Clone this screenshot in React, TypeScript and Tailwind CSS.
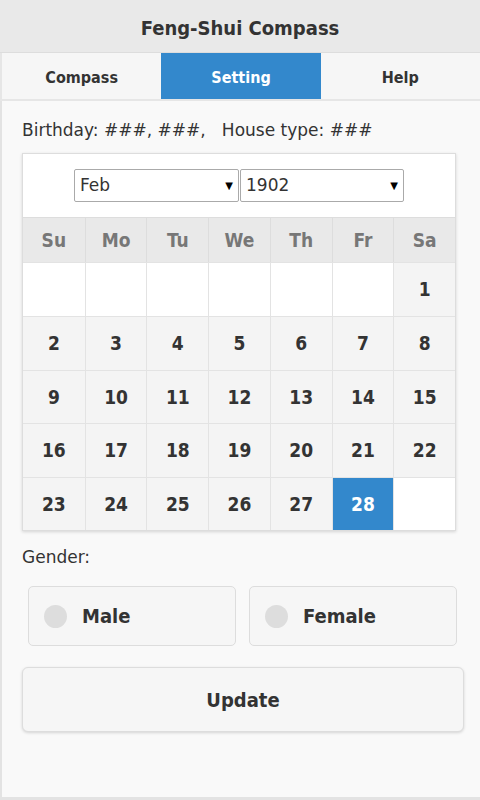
const BOLD = "font-['DejaVu_Sans_Condensed','DejaVu_Sans',sans-serif]";
const REGULAR = "font-['DejaVu_Sans',sans-serif]";

const weekdays = ['Su', 'Mo', 'Tu', 'We', 'Th', 'Fr', 'Sa'];
const rowHeights = ['h-[54px]', 'h-[54px]', 'h-[53px]', 'h-[54px]', 'h-[53px]'];

// Feb 1902 starts on Saturday, 28 days
const cells: (number | null)[] = [
  ...Array(6).fill(null),
  ...Array.from({ length: 28 }, (_, i) => i + 1),
  null,
];

function Radio({ label }: { label: string }) {
  return (
    <button className="w-[208px] h-[60px] flex items-center gap-[15px] pl-[15px] rounded-[5px] border border-[#dddddd] bg-[#f6f6f6] text-left">
      <span className="w-[23px] h-[23px] rounded-full bg-[#dddddd]" />
      <span className={`${BOLD} text-[20px] font-bold text-[#333333]`}>{label}</span>
    </button>
  );
}

function Select({ value, width }: { value: string; width: string }) {
  return (
    <div className={`${width} ${REGULAR} h-[33px] flex items-center justify-between px-[5px] border border-[#aaaaaa] rounded-[2px] bg-white text-[17px]`}>
      <span>{value}</span>
      <span className="text-[10px] text-black">▼</span>
    </div>
  );
}

export default function App() {
  return (
    <div className={`${BOLD} w-[480px] h-[800px] flex flex-col bg-[#f9f9f9] text-[#333333]`}>
      {/* Header */}
      <div className="h-[53px] flex items-center justify-center pt-[3px] bg-[#e9e9e9] border-b border-[#dddddd]">
        <h1 className="text-[20px] font-bold text-[#333333]">Feng-Shui Compass</h1>
      </div>

      {/* Tabs */}
      <div className="grid grid-cols-3 h-[48px] border-l-2 border-b-2 border-[#e6e6e6] bg-[#f6f6f6]">
        <div className="flex items-center justify-center pt-[3px] text-[16px] font-bold">Compass</div>
        <div className="flex items-center justify-center pt-[3px] text-[16px] font-bold bg-[#3388cc] text-white">Setting</div>
        <div className="flex items-center justify-center pt-[3px] text-[16px] font-bold">Help</div>
      </div>

      <div className="flex-1 border-l-2 border-b-[3px] border-[#e3e3e3] pl-[20px] pr-[17px] pt-[16px]">
        <p className={`${REGULAR} text-[17px] leading-[26px] text-[#333333] whitespace-pre`}>Birthday: ###, ###,   House type: ###</p>

        {/* Calendar */}
        <div className="mt-[10px] mr-[7px] bg-white border border-[#dddddd] shadow-[0_1px_3px_rgba(0,0,0,0.15)]">
          <div className="h-[63px] flex items-center justify-center gap-[1px]">
            <Select value="Feb" width="w-[165px]" />
            <Select value="1902" width="w-[164px]" />
          </div>
          <div className="grid grid-cols-7">
            {weekdays.map((d, i) => (
              <div
                key={d}
                className={`h-[45px] flex items-center justify-center bg-[#e9e9e9] border-t border-[#dddddd] text-[19px] font-bold text-[#777777] ${i > 0 ? 'border-l' : ''}`}
              >
                {d}
              </div>
            ))}
            {cells.map((n, i) => (
              <div
                key={i}
                className={`${rowHeights[Math.floor(i / 7)]} flex items-center justify-center border-t border-[#e3e3e3] text-[19px] font-bold ${i % 7 > 0 ? 'border-l' : ''} ${
                  n === null ? 'bg-white' : n === 28 ? 'bg-[#3388cc] text-white' : 'bg-[#f4f4f4] text-[#333333]'
                }`}
              >
                {n}
              </div>
            ))}
          </div>
        </div>

        <p className={`${REGULAR} mt-[13px] text-[17px] leading-[26px] text-[#333333]`}>Gender:</p>

        <div className="mt-[16px] flex gap-[13px] pl-[6px]">
          <Radio label="Male" />
          <Radio label="Female" />
        </div>

        <button className="mt-[21px] w-[442px] h-[65px] rounded-[6px] border border-[#dddddd] bg-[#f6f6f6] shadow-[0_1px_3px_rgba(0,0,0,0.15)] text-[20px] font-bold text-[#333333]">
          Update
        </button>
      </div>
    </div>
  );
}
